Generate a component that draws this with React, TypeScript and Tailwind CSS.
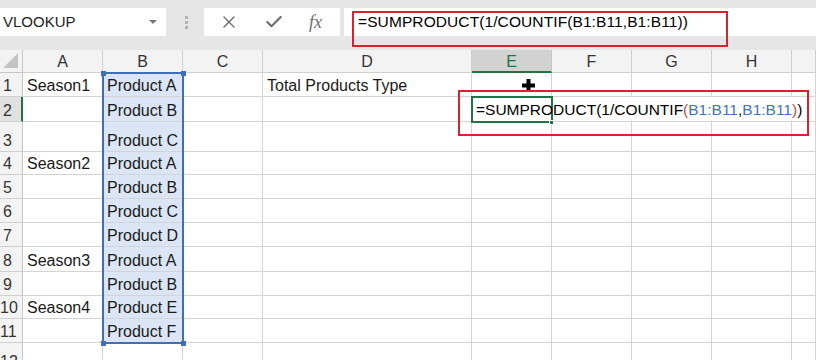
import { X, Check } from "lucide-react";

const colWidths = [23, 80, 80, 80, 209, 80, 80, 80, 80, 24];
const colNames = ["", "A", "B", "C", "D", "E", "F", "G", "H", ""];
const rowHeights = [24, 25, 30, 23, 24, 24, 24, 25, 24, 23, 24, 30];

const data: Record<number, string[]> = {
  1: ["Season1", "Product A", "", "Total Products Type"],
  2: ["", "Product B"],
  3: ["", "Product C"],
  4: ["Season2", "Product A"],
  5: ["", "Product B"],
  6: ["", "Product C"],
  7: ["", "Product D"],
  8: ["Season3", "Product A"],
  9: ["", "Product B"],
  10: ["Season4", "Product E"],
  11: ["", "Product F"],
};

function CellFormula() {
  return (
    <span className="absolute left-[4px] bottom-[2px] whitespace-nowrap text-[15.5px] leading-[18px] text-black z-10">
      =SUMPRODUCT(1/COUNTIF
      <span className="text-[#c0504d]">(</span>
      <span className="text-[#4472c4]">B1:B11</span>,
      <span className="text-[#4472c4]">B1:B11</span>
      <span className="text-[#c0504d]">)</span>)
    </span>
  );
}

export default function App() {
  return (
    <div className="relative w-[816px] h-[360px] overflow-hidden bg-white font-['Liberation_Sans',Arial,sans-serif] text-[#1a1a1a]">
      {/* formula bar */}
      <div className="flex h-[50px] items-start bg-[#e6e6e6] pt-[8px]">
        <div className="flex h-[28px] w-[166px] items-center justify-between bg-white pl-[3px] pr-[9px] text-[15px] text-[#222]">
          <span>VLOOKUP</span>
          <span className="h-0 w-0 border-x-[4px] border-t-[4px] border-x-transparent border-t-[#777]" />
        </div>
        <div className="ml-[19px] mt-[8px] flex flex-col gap-[2px]">
          <span className="h-[3px] w-[3px] bg-[#b4b4b4]" />
          <span className="h-[3px] w-[3px] bg-[#b4b4b4]" />
          <span className="h-[3px] w-[3px] bg-[#b4b4b4]" />
        </div>
        <div className="ml-[16px] flex h-[28px] w-[136px] items-center bg-white pl-[15px] text-[#6e6e6e]">
          <X size={20} strokeWidth={1.6} />
          <Check size={20} strokeWidth={2.6} className="ml-[25px]" />
          <span className="ml-[25px] font-['Liberation_Serif',serif] text-[18px] italic">fx</span>
        </div>
        <div className="ml-[4px] flex h-[28px] flex-1 items-center bg-white pl-[14px] text-[15.5px] tracking-[0.1px] text-black">
          =SUMPRODUCT(1/COUNTIF(B1:B11,B1:B11))
        </div>
      </div>

      {/* sheet */}
      <div className="grid grid-cols-[23px_80px_80px_80px_209px_80px_80px_80px_80px_24px] grid-rows-[23px_24px_25px_30px_23px_24px_24px_24px_25px_24px_23px_24px_30px] text-[16px] leading-[18px]">
        {colNames.map((c, i) =>
          i === 0 ? (
            <div key={i} className="relative border-r border-b border-[#c6c6c6] bg-[#f3f3f3]">
              <svg width="16" height="16" className="absolute right-[3px] bottom-[3px]">
                <polygon points="15,0 15,15 0,15" fill="#c3c3c3" />
              </svg>
            </div>
          ) : c === "E" ? (
            <div key={i} className="flex items-center justify-center border-r border-b-2 border-r-[#c6c6c6] border-b-[#217346] bg-[#d2d2d2] pt-[2px] text-[#217346]">
              {c}
            </div>
          ) : (
            <div key={i} className="flex items-center justify-center border-r border-b border-[#d0d0d0] bg-[#f3f3f3] pt-[1px] text-[#333]">
              {c}
            </div>
          )
        )}
        {rowHeights.map((_, r) => {
          const row = r + 1;
          const vals = data[row] || [];
          return colWidths.map((_, c) => {
            if (c === 0) {
              return (
                <div
                  key={`${row}-${c}`}
                  className={
                    row === 2
                      ? "flex items-end justify-start border-b border-r-2 border-b-[#d0d0d0] border-r-[#217346] bg-[#e1e1e1] pb-[1px] text-[#333]"
                      : "flex items-end justify-start border-b border-r border-b-[#d0d0d0] border-r-[#c6c6c6] bg-[#f3f3f3] pb-[1px] text-[#333]"
                  }
                >
                  <span className={row >= 10 ? "w-[16px] text-center" : "w-[16px] pl-[3px] text-left"}>
                    {row}
                  </span>
                </div>
              );
            }
            const val = vals[c - 1] || "";
            const inRange = c === 2 && row <= 11;
            const noRight = row === 2 && c >= 5 && c <= 8;
            return (
              <div
                key={`${row}-${c}`}
                className={[
                  "relative flex items-end whitespace-nowrap border-b border-[#d4d4d4] pb-[1px] pl-[4px]",
                  noRight ? "" : "border-r",
                  inRange ? "bg-[#dbe5f5]" : "",
                ].join(" ")}
              >
                {val}
                {row === 2 && c === 5 && <CellFormula />}
              </div>
            );
          });
        })}
      </div>

      {/* range selection B1:B11 */}
      <div className="absolute left-[102px] top-[72px] h-[272px] w-[82px] border-2 border-[#3f6fb8]" />
      <span className="absolute left-[101px] top-[71px] h-[5px] w-[5px] bg-[#3f6fb8]" />
      <span className="absolute left-[181px] top-[71px] h-[5px] w-[5px] bg-[#3f6fb8]" />
      <span className="absolute left-[101px] top-[341px] h-[5px] w-[5px] bg-[#3f6fb8]" />
      <span className="absolute left-[181px] top-[341px] h-[5px] w-[5px] bg-[#3f6fb8]" />

      {/* active cell E2 */}
      <div className="absolute left-[471px] top-[96px] h-[27px] w-[82px] border-2 border-[#217346]" />
      <span className="absolute left-[549px] top-[120px] h-[5px] w-[5px] border border-white bg-[#217346]" />

      {/* cursor */}
      <svg width="13" height="13" className="absolute left-[522px] top-[79px]">
        <path d="M4.5 0h4v4.5h4.5v4h-4.5v4.5h-4v-4.5h-4.5v-4h4.5z" fill="#000" />
      </svg>

      {/* red callouts */}
      <div className="absolute left-[352px] top-[11px] h-[36px] w-[376px] border-2 border-[#d5232f]" />
      <div className="absolute left-[458px] top-[90px] h-[46px] w-[351px] border-2 border-[#d5232f]" />
    </div>
  );
}
